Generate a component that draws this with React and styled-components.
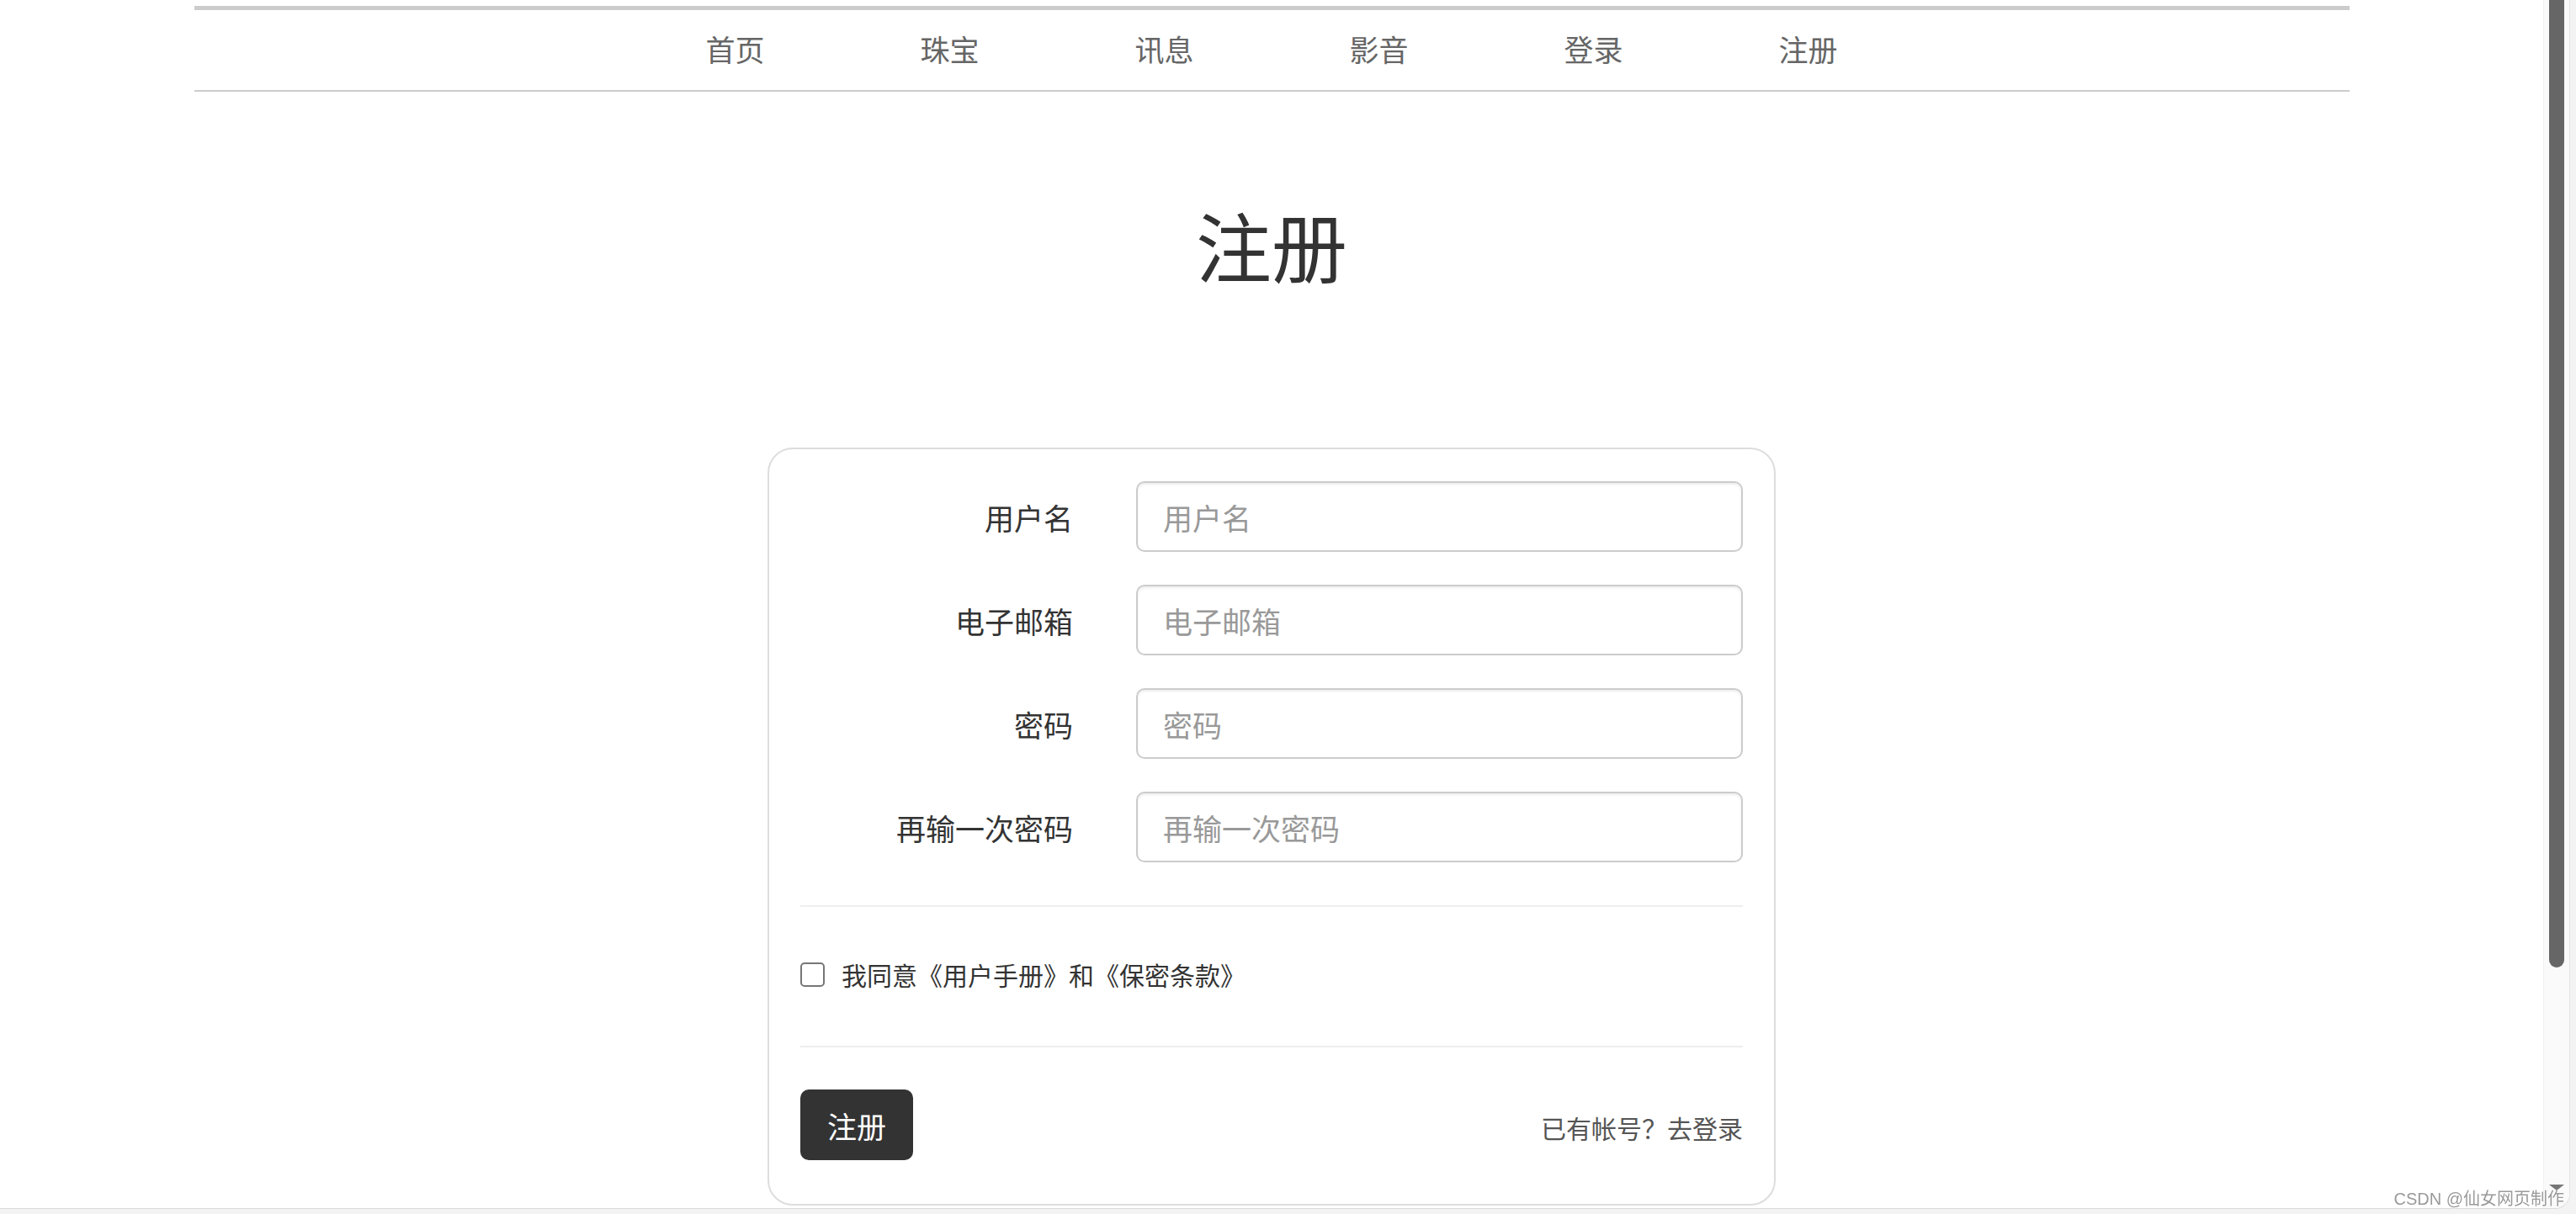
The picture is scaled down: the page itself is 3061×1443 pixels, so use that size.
import React from 'react'
import styled, { createGlobalStyle } from 'styled-components'

const GlobalStyle = createGlobalStyle`
    html, body {
        margin: 0;
        padding: 0;
        overflow: hidden;
        background: #f3f3f3;
    }
    body {
        font-family: "Noto Sans CJK SC", "Noto Sans", "Liberation Sans", sans-serif;
    }
    * {
        box-sizing: border-box;
    }
`

const navItems = ['首页', '珠宝', '讯息', '影音', '登录', '注册']

const fields = [
    { label: '用户名', type: 'text' },
    { label: '电子邮箱', type: 'email' },
    { label: '密码', type: 'password' },
    { label: '再输一次密码', type: 'password' },
]

function App() {
    return (
        <>
            <GlobalStyle />
            <Window>
                <Main>
                    <Container>
                        <Nav>
                            {navItems.map(item => (
                                <NavLink key={item} href="#">{item}</NavLink>
                            ))}
                        </Nav>

                        <Title>注册</Title>

                        <Card>
                            <Fields>
                                {fields.map(f => (
                                    <FormRow key={f.label}>
                                        <Label>{f.label}</Label>
                                        <Input type={f.type === 'password' ? 'text' : f.type} placeholder={f.label} />
                                    </FormRow>
                                ))}
                            </Fields>

                            <Divider $gap={51} />

                            <AgreeRow>
                                <Checkbox type="checkbox" />
                                <AgreeText>我同意《用户手册》和《保密条款》</AgreeText>
                            </AgreeRow>

                            <Divider $gap={65} />

                            <Actions>
                                <SubmitButton>注册</SubmitButton>
                                <LoginLink href="#">已有帐号？去登录</LoginLink>
                            </Actions>
                        </Card>
                    </Container>
                </Main>

                <ScrollRail>
                    <ScrollThumb />
                    <ScrollArrow />
                </ScrollRail>
            </Window>
            <Watermark>CSDN @仙女网页制作</Watermark>
        </>
    )
}

const Window = styled.div`
    width: 3054px;
    height: 1437px;
    display: flex;
    background: #fff;
    border-right: 1px solid #e2e2e2;
    border-bottom: 1px solid #dadada;
    border-bottom-right-radius: 18px;
    overflow: hidden;
`

const Main = styled.div`
    flex: 1;
    overflow: hidden;
`

const Container = styled.div`
    width: 2561px;
    margin: 0 auto;
    padding-top: 7px;
`

const Nav = styled.nav`
    display: flex;
    justify-content: center;
    height: 102px;
    border-top: 5px solid #ccc;
    border-bottom: 2px solid #ccc;
`

const NavLink = styled.a`
    width: 255px;
    text-align: center;
    line-height: 92px;
    font-size: 35px;
    color: #666;
    text-decoration: none;
`

const Title = styled.h1`
    margin: 132px 0 0;
    font-size: 90px;
    line-height: 99px;
    font-weight: 400;
    color: #333;
    text-align: center;
`

const Card = styled.div`
    width: 1198px;
    margin: 192px auto 0;
    padding: 38px 37px 52px;
    border: 2px solid #ddd;
    border-radius: 30px;
`

const Fields = styled.div`
    display: flex;
    flex-direction: column;
    gap: 39px;
`

const FormRow = styled.div`
    display: grid;
    grid-template-columns: 324px 721px;
    column-gap: 75px;
    align-items: center;
`

const Label = styled.label`
    text-align: right;
    font-size: 35px;
    color: #333;
`

const Input = styled.input`
    height: 84px;
    padding: 0 30px;
    border: 2px solid #ccc;
    border-radius: 10px;
    box-shadow: inset 0 2px 3px rgba(0, 0, 0, 0.075);
    font-family: inherit;
    font-size: 35px;
    color: #555;
    outline: none;

    &::placeholder {
        color: #999;
    }
`

const Divider = styled.hr`
    margin: ${props => props.$gap}px 0 0;
    border: 0;
    border-top: 2px solid #eee;
`

const AgreeRow = styled.label`
    display: flex;
    align-items: center;
    gap: 20px;
    height: 40px;
    margin-top: 60px;
`

const Checkbox = styled.input`
    appearance: none;
    width: 29px;
    height: 29px;
    margin: 0;
    border: 2.5px solid #767676;
    border-radius: 5px;
    background: #fff;
`

const AgreeText = styled.span`
    font-size: 30px;
    color: #333;
`

const Actions = styled.div`
    display: flex;
    justify-content: space-between;
    align-items: center;
    margin-top: 50px;
`

const SubmitButton = styled.button`
    width: 134px;
    height: 84px;
    border: none;
    border-radius: 10px;
    background: #333;
    color: #fff;
    font-family: inherit;
    font-size: 35px;
`

const LoginLink = styled.a`
    margin-top: 6px;
    font-size: 30px;
    color: #555;
    text-decoration: none;
`

const ScrollRail = styled.div`
    width: 31px;
    display: flex;
    flex-direction: column;
    justify-content: space-between;
    background: #fafafa;
    border-left: 1px solid #f2f2f2;
`

const ScrollThumb = styled.div`
    width: 18px;
    height: 1150px;
    margin-left: 6px;
    background: #666;
    border-radius: 0 0 9px 9px;
`

const ScrollArrow = styled.div`
    width: 0;
    height: 0;
    margin: 0 0 21px 6px;
    border-top: 7px solid #777;
    border-left: 9px solid transparent;
    border-right: 9px solid transparent;
`

const Watermark = styled.div`
    position: fixed;
    right: 14px;
    bottom: 8px;
    font-family: "Liberation Sans", "Noto Sans CJK SC", sans-serif;
    font-size: 20px;
    line-height: 20px;
    color: #9a9a9a;
    text-shadow: 0 0 2px #fff;
    white-space: nowrap;
`

export default App
